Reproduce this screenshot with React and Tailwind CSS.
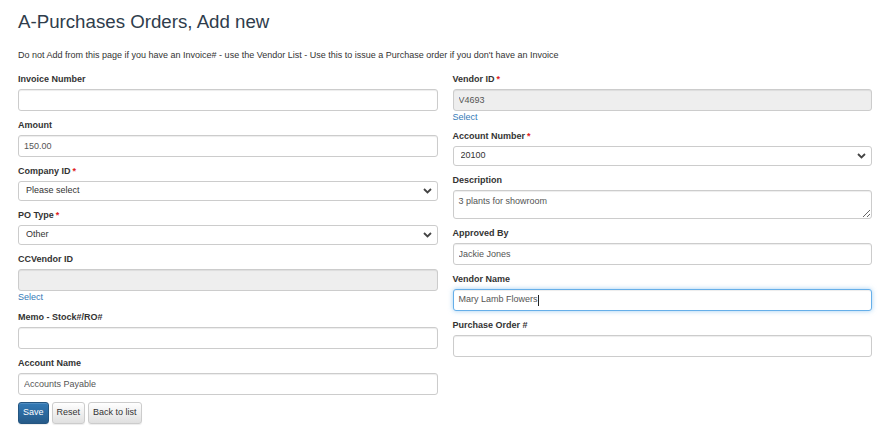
import React from "react";

const font = { fontFamily: '"Liberation Sans", Arial, sans-serif' };

function Label({ children, required }) {
  return (
    <label className="block h-[12px] leading-[12px] mb-[4px] text-[9px] font-bold text-[#333]">
      {children}
      {required && <span className="text-[#e02020] ml-[2px]">*</span>}
    </label>
  );
}

function TextInput({ value = "", disabled }) {
  return (
    <input
      type="text"
      readOnly
      defaultValue={value}
      className={`block w-full h-[22px] px-[5px] text-[9px] text-[#555] border border-[#ccc] rounded-[3px] shadow-[inset_0_1px_1px_rgba(0,0,0,0.075)] outline-none ${
        disabled ? "bg-[#eee]" : "bg-white"
      }`}
    />
  );
}

function Select({ value }) {
  return (
    <div className="relative">
      <select
        defaultValue={value}
        className="block w-full h-[20px] pl-[7px] pr-[20px] text-[9px] text-[#333] bg-white border border-[#ccc] rounded-[3px] appearance-none outline-none"
      >
        <option>{value}</option>
      </select>
      <svg
        className="absolute right-[6px] top-[7px] pointer-events-none"
        width="9"
        height="6"
        viewBox="0 0 9 6"
      >
        <polyline points="1,1 4.5,4.5 8,1" fill="none" stroke="#444" strokeWidth="1.8" />
      </svg>
    </div>
  );
}

function SelectLink() {
  return <div className="h-[12px] leading-[12px] text-[9px] text-[#337ab7]">Select</div>;
}

function Group({ children, className = "mb-[8px]" }) {
  return <div className={className}>{children}</div>;
}

const btnBase =
  "h-[22px] px-[4px] text-[9px] rounded-[3px] border shadow-[inset_0_1px_0_rgba(255,255,255,0.15),0_1px_1px_rgba(0,0,0,0.075)]";
const btnDefault = `${btnBase} text-[#333] border-[#ccc] bg-gradient-to-b from-white to-[#e0e0e0]`;

export default function App() {
  return (
    <div className="bg-white min-h-[431px] px-[18px]" style={font}>
      <h1 className="pt-[11px] h-[33px] leading-[22px] text-[18.7px] font-normal text-[#2f3d4c]">
        A-Purchases Orders, Add new
      </h1>
      <p className="mt-[16px] mb-[12px] h-[12px] leading-[12px] text-[9px] text-[#333]">
        Do not Add from this page if you have an Invoice# - use the Vendor List - Use this to issue a Purchase order if you don't have an Invoice
      </p>

      <div className="grid grid-cols-2 gap-x-[15px]">
        {/* left column */}
        <div>
          <Group>
            <Label>Invoice Number</Label>
            <TextInput />
          </Group>
          <Group>
            <Label>Amount</Label>
            <TextInput value="150.00" />
          </Group>
          <Group>
            <Label required>Company ID</Label>
            <Select value="Please select" />
          </Group>
          <Group>
            <Label required>PO Type</Label>
            <Select value="Other" />
          </Group>
          <Group>
            <Label>CCVendor ID</Label>
            <TextInput disabled />
            <SelectLink />
          </Group>
          <Group>
            <Label>Memo - Stock#/RO#</Label>
            <TextInput />
          </Group>
          <Group className="mb-[7px]">
            <Label>Account Name</Label>
            <TextInput value="Accounts Payable" />
          </Group>
        </div>

        {/* right column */}
        <div>
          <Group className="mb-[7px]">
            <Label required>Vendor ID</Label>
            <TextInput value="V4693" disabled />
            <SelectLink />
          </Group>
          <Group>
            <Label required>Account Number</Label>
            <Select value="20100" />
          </Group>
          <Group>
            <Label>Description</Label>
            <textarea
              readOnly
              defaultValue="3 plants for showroom"
              className="block w-full h-[29px] px-[5px] py-[4px] leading-[12px] text-[9px] text-[#555] bg-white border border-[#ccc] rounded-[3px] shadow-[inset_0_1px_1px_rgba(0,0,0,0.075)] outline-none"
            />
          </Group>
          <Group>
            <Label>Approved By</Label>
            <TextInput value="Jackie Jones" />
          </Group>
          <Group>
            <Label>Vendor Name</Label>
            <div className="flex items-center w-full h-[22px] px-[5px] text-[9px] text-[#555] bg-white border border-[#66afe9] rounded-[3px] shadow-[inset_0_1px_1px_rgba(0,0,0,0.075),0_0_5px_rgba(102,175,233,0.6)]">
              <span>Mary Lamb Flowers</span>
              <span className="inline-block w-px h-[11px] bg-[#222]" />
            </div>
          </Group>
          <Group>
            <Label>Purchase Order #</Label>
            <TextInput />
          </Group>
        </div>
      </div>

      <div className="flex gap-[3px]">
        <button className={`${btnBase} text-white border-[#245580] bg-gradient-to-b from-[#337ab7] to-[#265a88]`}>
          Save
        </button>
        <button className={btnDefault}>Reset</button>
        <button className={btnDefault}>Back to list</button>
      </div>
    </div>
  );
}
